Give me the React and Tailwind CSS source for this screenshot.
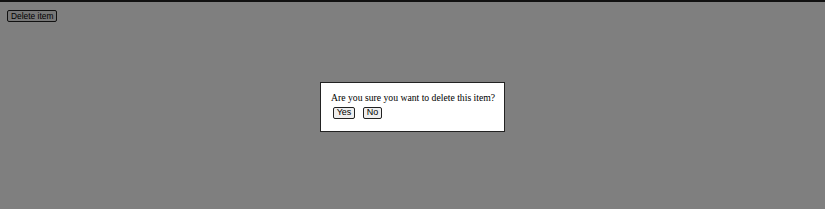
export default function App() {
  return (
    <div className="relative w-[825px] h-[209px] bg-white border-t-2 border-[#111] overflow-hidden">
      <div className="flex pt-[8px] pl-[7px]">
        <button className="h-[12px] px-[3px] border border-[#222] rounded-[2px] bg-[#efefef] text-[8.4px] leading-none text-black" style={{ fontFamily: '"Liberation Sans", Arial, sans-serif' }}>
          Delete item
        </button>
      </div>
      <div className="absolute inset-0 bg-black/50 flex items-center justify-center">
        <div className="mt-[2px] w-[185px] h-[50px] bg-white border border-[#222] pl-[10px] pt-[9px]" style={{ fontFamily: '"Liberation Serif", "Times New Roman", serif' }}>
          <p className="text-[9.7px] leading-[12px] text-black">Are you sure you want to delete this item?</p>
          <div className="flex gap-[8px] pl-[2px] mt-[3px]">
            <button className="h-[12px] w-[22px] border border-[#222] rounded-[2px] bg-[#efefef] text-[9px] leading-none text-black" style={{ fontFamily: '"Liberation Sans", Arial, sans-serif' }}>Yes</button>
            <button className="h-[12px] w-[19px] border border-[#222] rounded-[2px] bg-[#efefef] text-[9px] leading-none text-black" style={{ fontFamily: '"Liberation Sans", Arial, sans-serif' }}>No</button>
          </div>
        </div>
      </div>
    </div>
  );
}
